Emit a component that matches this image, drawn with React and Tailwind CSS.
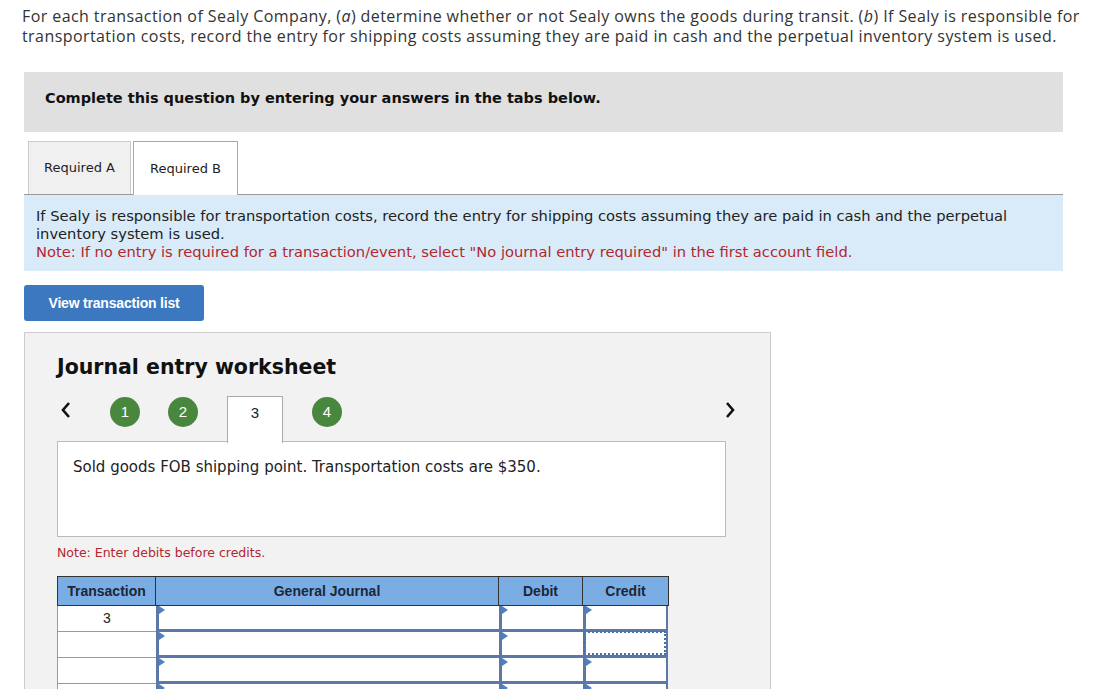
import React from "react";

const verdana = { fontFamily: '"DejaVu Sans", Verdana, sans-serif' };

function Marker() {
  return (
    <span className="absolute left-0 top-0 w-0 h-0 border-t-[4px] border-b-[4px] border-l-[6px] border-t-transparent border-b-transparent border-l-[#4f7fc4]" />
  );
}

function InputCell({ width, last, dotted }) {
  return (
    <div
      className={`relative h-[26px] bg-white border-l-[3px] border-b-[3px] border-[#5b78a6] ${last ? "border-r-[2px]" : ""} ${width}`}
    >
      {dotted ? (
        <div className="absolute inset-0 border-2 border-dotted border-[#4a6fa8] -ml-[3px] -mt-[1px]" />
      ) : (
        <Marker />
      )}
    </div>
  );
}

function Row({ num, dotted }) {
  return (
    <div className="flex">
      <div className="w-[99px] h-[26px] bg-white border-l border-b border-[#999] text-center text-[14px] leading-[24px] text-[#222]">
        {num}
      </div>
      <InputCell width="w-[343px]" />
      <InputCell width="w-[84px]" />
      <InputCell width="w-[85px]" last dotted={dotted} />
    </div>
  );
}

function Circle({ n }) {
  return (
    <div className="w-[30px] h-[30px] rounded-full bg-[#4a873e] text-white text-[15px] flex items-center justify-center" style={{ fontFamily: '"Liberation Sans", Arial, sans-serif' }}>
      {n}
    </div>
  );
}

export default function App() {
  return (
    <div className="w-[1115px] h-[689px] overflow-hidden bg-white text-[#222]" style={{ fontFamily: '"Liberation Sans", Arial, sans-serif' }}>
      <p className="pl-[22px] pt-[6px] pr-[26px] text-[16px] leading-[20px] tracking-[0.42px] text-[#333]" style={{ fontFamily: '"Open Sans", "Liberation Sans", sans-serif' }}>
        For each transaction of Sealy Company, (<i>a</i>) determine whether or not Sealy owns the goods during transit. (<i>b</i>) If Sealy is responsible for transportation costs, record the entry for shipping costs assuming they are paid in cash and the perpetual inventory system is used.
      </p>

      <div className="ml-[24px] mt-[26px] w-[1039px] h-[60px] bg-[#e0e0e0] pl-[21px] pt-[16px]">
        <p className="font-bold text-[14.5px] leading-[20px] text-[#111]" style={verdana}>
          Complete this question by entering your answers in the tabs below.
        </p>
      </div>

      <div className="ml-[24px] mt-[9px] w-[1039px] flex items-end gap-[2px] pl-[4px] border-b border-[#999]">
        <div className="w-[103px] h-[53px] bg-[#f0f0f0] border border-b-0 border-[#ccc] flex items-center justify-center text-[13px]" style={verdana}>
          Required A
        </div>
        <div className="w-[105px] h-[54px] -mb-px bg-white border border-b-0 border-[#aaa] flex items-center justify-center text-[13px]" style={verdana}>
          Required B
        </div>
      </div>

      <div className="ml-[24px] w-[1039px] h-[76px] bg-[#d9ebf8] pl-[12px] pt-[12px] text-[14.7px] leading-[18px]" style={verdana}>
        <p className="text-[#222]">
          If Sealy is responsible for transportation costs, record the entry for shipping costs assuming they are paid in cash and the perpetual inventory system is used.
        </p>
        <p className="text-[#b3272d]">
          Note: If no entry is required for a transaction/event, select "No journal entry required" in the first account field.
        </p>
      </div>

      <button className="ml-[24px] mt-[14px] w-[180px] h-[36px] rounded-[3px] bg-[#3b78bf] text-white font-bold text-[14px] tracking-[-0.2px] block">
        View transaction list
      </button>

      <div className="ml-[24px] mt-[11px] w-[747px] h-[400px] bg-[#f2f2f2] border border-[#ccc] pl-[32px] pr-[30px]">
        <h2 className="pt-[22px] text-[20.5px] leading-[24px] font-bold text-[#111]" style={verdana}>
          Journal entry worksheet
        </h2>

        <div className="mt-[17px] flex items-start h-[46px]">
          <div className="w-[53px] pl-[3px] pt-[4px]">
            <svg width="12" height="20" viewBox="0 0 12 20">
              <path d="M9 3 L3 10 L9 17" fill="none" stroke="#111" strokeWidth="2.6" />
            </svg>
          </div>
          <div className="pt-px"><Circle n="1" /></div>
          <div className="ml-[28px] pt-px"><Circle n="2" /></div>
          <div className="ml-[29px] w-[56px] h-[47px] bg-white border border-b-0 border-[#aaa] text-center text-[15px] pt-[5px] relative z-10">
            3
          </div>
          <div className="ml-[29px] pt-px"><Circle n="4" /></div>
          <div className="ml-auto pt-[4px] pr-[4px]">
            <svg width="12" height="20" viewBox="0 0 12 20">
              <path d="M3 3 L9 10 L3 17" fill="none" stroke="#111" strokeWidth="2.6" />
            </svg>
          </div>
        </div>

        <div className="w-[669px] h-[96px] -mt-px bg-white border border-[#bbb] pl-[15px] pt-[15px] text-[15px] leading-[20px]" style={verdana}>
          Sold goods FOB shipping point. Transportation costs are $350.
        </div>

        <p className="mt-[8px] text-[12.5px] leading-[16px] text-[#b3272d]" style={verdana}>
          Note: Enter debits before credits.
        </p>

        <div className="mt-[15px] w-[612px]">
          <div className="flex h-[30px] bg-[#7badE5] border border-[#333] font-bold text-[14px] text-[#1b2638]">
            <div className="w-[98px] flex items-center justify-center border-r border-[#333]">Transaction</div>
            <div className="w-[343px] flex items-center justify-center border-r border-[#333]">General Journal</div>
            <div className="w-[84px] flex items-center justify-center border-r border-[#333]">Debit</div>
            <div className="w-[85px] flex items-center justify-center">Credit</div>
          </div>
          <Row num="3" />
          <Row num="" dotted />
          <Row num="" />
          <Row num="" />
        </div>
      </div>
    </div>
  );
}
